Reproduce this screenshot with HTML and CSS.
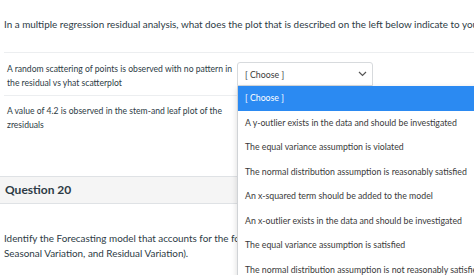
FILE: index.html
```html
<!DOCTYPE html>
<html>
<head>
<meta charset="utf-8">
<link rel="stylesheet" href="styles.css">
</head>
<body>
<div class="page">
  <div class="question">
    <p class="q-text">In a multiple regression residual analysis, what does the plot that is described on the left below indicate to you about the model?</p>
    <div class="answers">
      <div class="row">
        <div class="prompt">A random scattering of points is observed with no pattern in the residual vs yhat scatterplot</div>
        <div class="select-cell">
          <div class="select">
            <span>[ Choose ]</span>
            <svg class="chev" width="9" height="6" viewBox="0 0 9 6"><path d="M1 1l3.5 3.5L8 1" fill="none" stroke="#555" stroke-width="1.2"/></svg>
          </div>
        </div>
      </div>
      <div class="row">
        <div class="prompt">A value of 4.2 is observed in the stem-and leaf plot of the zresiduals</div>
        <div class="select-cell"></div>
      </div>
    </div>
  </div>
  <div class="q-header">Question 20</div>
  <div class="q-body">
    <p class="q-text2">Identify the Forecasting model that accounts for the four components (Trend, Cyclical Variation, Seasonal Variation, and Residual Variation).</p>
  </div>
  <ul class="dropdown">
    <li class="active">[ Choose ]</li>
    <li>A y-outlier exists in the data and should be investigated</li>
    <li>The equal variance assumption is violated</li>
    <li>The normal distribution assumption is reasonably satisfied</li>
    <li>An x-squared term should be added to the model</li>
    <li>An x-outlier exists in the data and should be investigated</li>
    <li>The equal variance assumption is satisfied</li>
    <li>The normal distribution assumption is not reasonably satisfied</li>
  </ul>
</div>
</body>
</html>
```
FILE: styles.css
```css
html, body {
  margin: 0;
  padding: 0;
  background: #fff;
  overflow: hidden;
}
body {
  font-family: Lato, "Open Sans", sans-serif;
  color: #2d3b45;
  width: 474px;
  height: 275px;
}
.page {
  position: relative;
  width: 474px;
  height: 275px;
  overflow: hidden;
}
.question {
  padding: 0 0 0 4px;
}
.q-text {
  margin: 0;
  padding-top: 17px;
  height: 53px;
  box-sizing: border-box;
  font-size: 9.9px;
  line-height: 14px;
  white-space: nowrap;
  overflow: hidden;
  border-bottom: 1px solid #eceef0;
}
.answers {
  padding-top: 9px;
}
.row {
  display: flex;
  width: 233px;
  position: relative;
}
.row + .row {
  border-top: 1px solid #eceef0;
}
.prompt {
  width: 233px;
  flex: none;
  padding: 0 0 0 3px;
  font-size: 8.6px;
  line-height: 14px;
  box-sizing: border-box;
}
.row:first-child .prompt {
  padding-bottom: 5px;
}
.row + .row .prompt {
  padding-top: 8px;
}
.select-cell {
  position: relative;
}
.select {
  position: absolute;
  left: 0;
  top: 0;
  width: 136px;
  height: 24px;
  box-sizing: border-box;
  border: 1px solid #d7dadd;
  border-radius: 3px 3px 0 0;
  display: flex;
  align-items: center;
  justify-content: space-between;
  padding: 0 5px 0 7px;
  font-size: 8.8px;
  color: #3a3a3a;
  background: #fff;
}
.q-header {
  margin-top: 44px;
  height: 28px;
  box-sizing: border-box;
  border-top: 1px solid #dfe2e5;
  border-bottom: 1px solid #dfe2e5;
  background: #f5f5f5;
  padding-left: 5px;
  font-weight: 700;
  font-size: 12px;
  line-height: 26px;
}
.q-body {
  padding: 27px 0 0 4px;
}
.q-text2 {
  margin: 0;
  font-size: 9.9px;
  line-height: 15px;
  width: 440px;
}
.dropdown {
  position: absolute;
  left: 237px;
  top: 86px;
  width: 260px;
  margin: 0;
  padding: 0;
  list-style: none;
  background: #fff;
  border-left: 1px solid #d0d3d6;
  box-shadow: 0 2px 6px rgba(0,0,0,0.15);
}
.dropdown li {
  height: 24.5px;
  line-height: 24.5px;
  padding-left: 7px;
  font-size: 8.75px;
  color: #3a3a3a;
  white-space: nowrap;
}
.dropdown li.active {
  background: #2b8af2;
  color: #fff;
}
```
